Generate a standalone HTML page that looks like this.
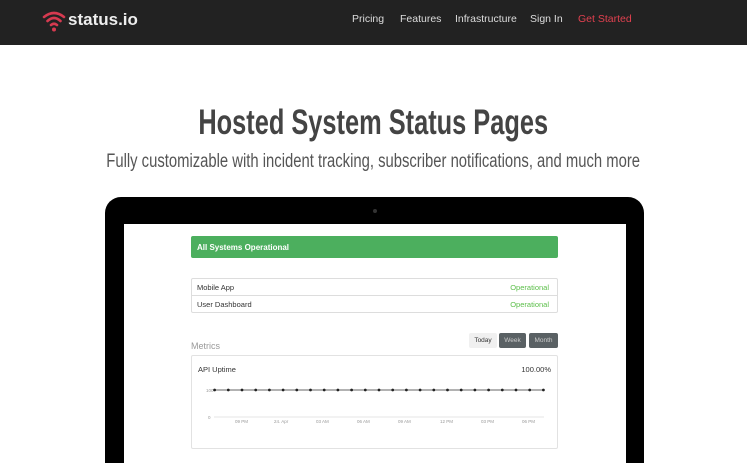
<!DOCTYPE html>
<html><head><style>
*{margin:0;padding:0;box-sizing:border-box}
html,body{width:747px;height:463px;overflow:hidden}
body{background:#fff;font-family:"Liberation Sans",sans-serif;position:relative}
.nav{position:absolute;left:0;top:0;width:747px;height:45px;background:#222;}
.nav a{position:absolute;top:13px;font-size:10.5px;color:#ddd;text-decoration:none}
.logo{position:absolute;left:68px;top:10px;font-size:17px;color:#eee;font-weight:bold}
h1{position:absolute;left:0;width:747px;top:103px;text-align:center;font-size:35px;color:#444;font-weight:bold;white-space:nowrap}
h1 span,.sub span{display:inline-block;transform-origin:center;}
.sub{position:absolute;left:0;width:747px;top:151px;text-align:center;font-size:19px;color:#555;white-space:nowrap}
.lap{position:absolute;left:105px;top:197px;width:539px;height:266px;background:#000;border-radius:16px 16px 0 0;}
.cam{position:absolute;left:373px;top:209px;width:4px;height:4px;border-radius:2px;background:#333}
.scr{position:absolute;left:124px;top:224px;width:502px;height:239px;background:#fff}
.g{position:absolute;left:191px;top:236px;width:367px;height:22px;background:#4caf5e;border-radius:2px;color:#fff;font-size:8px;font-weight:bold;padding:7px 6px}
.tb{position:absolute;left:191px;top:278px;width:367px;height:35px;border:1px solid #ddd;border-radius:2px}
.row{height:16px;font-size:7.5px;color:#333;padding:4px 5px;position:relative}
.row+.row{border-top:1px solid #ddd;height:17px}
.row b{position:absolute;right:8px;top:4px;color:#5cbf4a;font-weight:normal}
.btn{position:absolute;top:333px;height:15px;font-size:6.5px;padding-top:4px;text-align:center;border-radius:2px}
.ch{position:absolute;left:191px;top:355px;width:367px;height:94px;border:1px solid #e2e2e2;border-radius:2px}
</style></head><body>
<div class="nav">
<svg style="position:absolute;left:42px;top:10px" width="24" height="22" viewBox="0 0 24 22"><g fill="none" stroke="#d63a50" stroke-width="2.6" stroke-linecap="round"><path d="M2 7 Q12 -1 22 7"/><path d="M5.5 11 Q12 5 18.5 11"/><path d="M9 15 Q12 12.5 15 15"/></g><circle cx="12" cy="19.5" r="2" fill="#d63a50"/></svg>
<div class="logo">status.io</div>
<a style="left:352px">Pricing</a><a style="left:400px">Features</a><a style="left:455px">Infrastructure</a><a style="left:530px">Sign In</a><a style="left:578px;color:#e0404f">Get Started</a>
</div>
<h1><span style="transform:scaleX(0.725)">Hosted System Status Pages</span></h1>
<div class="sub"><span style="transform:scaleX(0.78)">Fully customizable with incident tracking, subscriber notifications, and much more</span></div>
<div class="lap"></div><div class="cam"></div><div class="scr"></div>
<div class="g">All Systems Operational</div>
<div class="tb"><div class="row">Mobile App<b>Operational</b></div><div class="row">User Dashboard<b>Operational</b></div></div>
<div style="position:absolute;left:191px;top:341px;font-size:9px;color:#999">Metrics</div>
<div class="btn" style="left:469px;width:28px;background:#f0f0f0;color:#333">Today</div>
<div class="btn" style="left:499px;width:27px;background:#5a6164;color:#ccc">Week</div>
<div class="btn" style="left:529px;width:29px;background:#5a6164;color:#ccc">Month</div>
<div class="ch">
<div style="position:absolute;left:6px;top:9px;font-size:7.5px;color:#333">API Uptime</div>
<div style="position:absolute;right:6px;top:9px;font-size:7.5px;color:#333">100.00%</div>
<svg style="position:absolute;left:0;top:0" width="367" height="94">
<g font-size="4.5" fill="#999" font-family="Liberation Sans">
<text x="14" y="36">100</text><text x="16" y="63">0</text>
<text x="43" y="67">09 PM</text><text x="82" y="67">24. Apr</text><text x="124" y="67">03 AM</text><text x="165" y="67">06 AM</text><text x="206" y="67">09 AM</text><text x="248" y="67">12 PM</text><text x="289" y="67">03 PM</text><text x="330" y="67">06 PM</text>
</g>
<line x1="22" y1="61" x2="352" y2="61" stroke="#ccc" stroke-width="0.6"/>
<line x1="22" y1="34" x2="352" y2="34" stroke="#333" stroke-width="0.7"/>
<g fill="#222">
<circle cx="22.6" cy="34" r="1.4"/><circle cx="36.3" cy="34" r="1.4"/><circle cx="50" cy="34" r="1.4"/><circle cx="63.7" cy="34" r="1.4"/><circle cx="77.4" cy="34" r="1.4"/><circle cx="91.1" cy="34" r="1.4"/><circle cx="104.8" cy="34" r="1.4"/><circle cx="118.5" cy="34" r="1.4"/><circle cx="132.2" cy="34" r="1.4"/><circle cx="145.9" cy="34" r="1.4"/><circle cx="159.6" cy="34" r="1.4"/><circle cx="173.3" cy="34" r="1.4"/><circle cx="187" cy="34" r="1.4"/><circle cx="200.7" cy="34" r="1.4"/><circle cx="214.4" cy="34" r="1.4"/><circle cx="228.1" cy="34" r="1.4"/><circle cx="241.8" cy="34" r="1.4"/><circle cx="255.5" cy="34" r="1.4"/><circle cx="269.2" cy="34" r="1.4"/><circle cx="282.9" cy="34" r="1.4"/><circle cx="296.6" cy="34" r="1.4"/><circle cx="310.3" cy="34" r="1.4"/><circle cx="324" cy="34" r="1.4"/><circle cx="337.7" cy="34" r="1.4"/><circle cx="351.4" cy="34" r="1.4"/>
</g></svg>
</div>
</body></html>
